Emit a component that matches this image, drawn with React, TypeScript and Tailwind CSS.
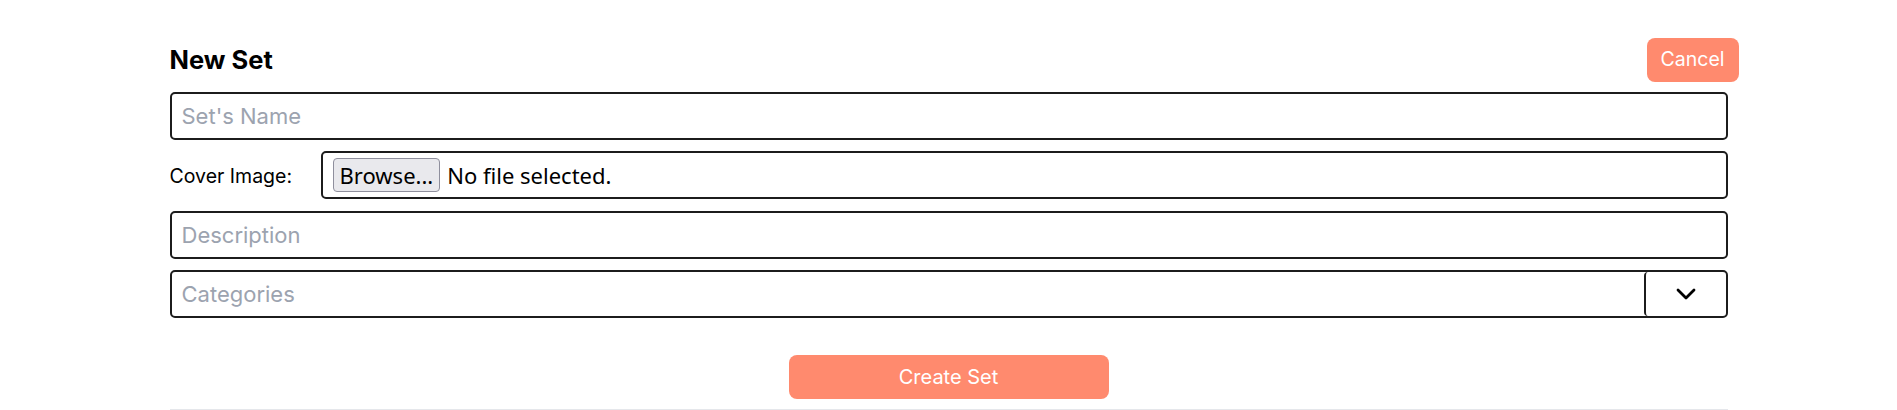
import { useState } from 'react';

export default function App() {
  const [name, setName] = useState('');
  const [description, setDescription] = useState('');
  const [category, setCategory] = useState('');

  return (
    <div className="min-h-screen bg-white font-['Inter',sans-serif] text-black">
      <div className="mx-auto w-[1558px] pt-[38px]">
        {/* Cabeçalho */}
        <div className="flex h-[44px] items-center justify-between">
          <h1 className="text-[25.5px] font-bold leading-none">New Set</h1>
          <button className="mr-[-11px] h-[44px] rounded-lg bg-[#ff8a6e] px-[14px] text-[19.5px] text-white">
            Cancel
          </button>
        </div>

        <form className="mt-[10px] flex flex-col gap-[11.8px]" onSubmit={(e) => e.preventDefault()}>
          <input
            value={name}
            onChange={(e) => setName(e.target.value)}
            placeholder="Set's Name"
            className="h-[47.7px] w-full rounded-[5px] border-2 border-[#1c1c1c] px-[10px] text-[22px] outline-none placeholder:text-[#9ca3af]"
          />

          <div className="flex h-[47.7px] items-center">
            <label className="w-[151px] shrink-0 pt-[2px] text-[19.5px]">Cover Image:</label>
            <div className="flex h-full flex-1 items-center rounded-[5px] border-2 border-[#1c1c1c] pl-[10px] font-['Noto_Sans',sans-serif] text-[22px]">
              <span className="flex h-[34px] items-center rounded-[4px] border border-[#8f8f9d] bg-[#e9e9ed] px-[6px]">
                Browse...
              </span>
              <span className="ml-[7px]">No file selected.</span>
            </div>
          </div>

          <input
            value={description}
            onChange={(e) => setDescription(e.target.value)}
            placeholder="Description"
            className="h-[47.7px] w-full rounded-[5px] border-2 border-[#1c1c1c] px-[10px] text-[22px] outline-none placeholder:text-[#9ca3af]"
          />

          <div className="flex h-[47.7px] overflow-hidden rounded-[5px] border-2 border-[#1c1c1c]">
            <input
              value={category}
              onChange={(e) => setCategory(e.target.value)}
              placeholder="Categories"
              className="h-full flex-1 px-[10px] text-[22px] outline-none placeholder:text-[#9ca3af]"
            />
            <button
              type="button"
              className="flex w-[82px] items-center justify-center rounded-l-[4px] border-l-2 border-[#1c1c1c]"
            >
              <svg width="20" height="12" viewBox="0 0 20 12" fill="none">
                <path d="M2 2 L10 10 L18 2" stroke="#000" strokeWidth="2.8" strokeLinecap="round" strokeLinejoin="round" />
              </svg>
            </button>
          </div>

          <div className="mt-[25px] flex justify-center">
            <button type="submit" className="h-[44px] w-[320px] rounded-lg bg-[#ff8a6e] text-[20px] text-white">
              Create Set
            </button>
          </div>
        </form>

        <div className="mt-[10px] h-[2px] bg-[#e5e7eb]" />
      </div>
    </div>
  );
}
